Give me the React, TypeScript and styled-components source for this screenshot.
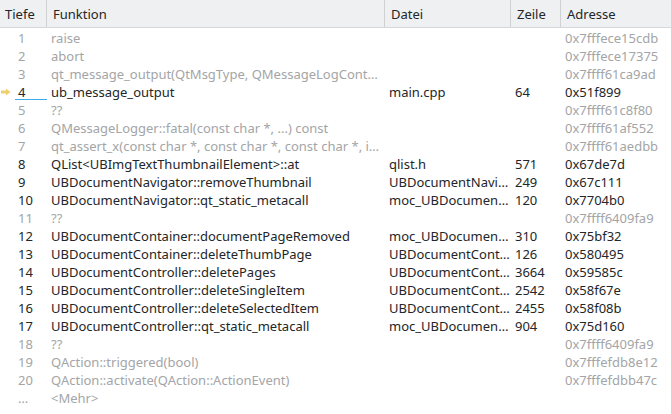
import styled, { createGlobalStyle } from 'styled-components';

interface Frame {
    level: string;
    func: string;
    file?: string;
    line?: string;
    address?: string;
    usable: boolean;
    current?: boolean;
}

const frames: Frame[] = [
    { level: '1', func: 'raise', address: '0x7fffece15cdb', usable: false },
    { level: '2', func: 'abort', address: '0x7fffece17375', usable: false },
    { level: '3', func: 'qt_message_output(QtMsgType, QMessageLogCont…', address: '0x7ffff61ca9ad', usable: false },
    { level: '4', func: 'ub_message_output', file: 'main.cpp', line: '64', address: '0x51f899', usable: true, current: true },
    { level: '5', func: '??', address: '0x7ffff61c8f80', usable: false },
    { level: '6', func: 'QMessageLogger::fatal(const char *, ...) const', address: '0x7ffff61af552', usable: false },
    { level: '7', func: 'qt_assert_x(const char *, const char *, const char *, i…', address: '0x7ffff61aedbb', usable: false },
    { level: '8', func: 'QList<UBImgTextThumbnailElement>::at', file: 'qlist.h', line: '571', address: '0x67de7d', usable: true },
    { level: '9', func: 'UBDocumentNavigator::removeThumbnail', file: 'UBDocumentNavi…', line: '249', address: '0x67c111', usable: true },
    { level: '10', func: 'UBDocumentNavigator::qt_static_metacall', file: 'moc_UBDocumen…', line: '120', address: '0x7704b0', usable: true },
    { level: '11', func: '??', address: '0x7ffff6409fa9', usable: false },
    { level: '12', func: 'UBDocumentContainer::documentPageRemoved', file: 'moc_UBDocumen…', line: '310', address: '0x75bf32', usable: true },
    { level: '13', func: 'UBDocumentContainer::deleteThumbPage', file: 'UBDocumentCont…', line: '126', address: '0x580495', usable: true },
    { level: '14', func: 'UBDocumentController::deletePages', file: 'UBDocumentCont…', line: '3664', address: '0x59585c', usable: true },
    { level: '15', func: 'UBDocumentController::deleteSingleItem', file: 'UBDocumentCont…', line: '2542', address: '0x58f67e', usable: true },
    { level: '16', func: 'UBDocumentController::deleteSelectedItem', file: 'UBDocumentCont…', line: '2455', address: '0x58f08b', usable: true },
    { level: '17', func: 'UBDocumentController::qt_static_metacall', file: 'moc_UBDocumen…', line: '904', address: '0x75d160', usable: true },
    { level: '18', func: '??', address: '0x7ffff6409fa9', usable: false },
    { level: '19', func: 'QAction::triggered(bool)', address: '0x7fffefdb8e12', usable: false },
    { level: '20', func: 'QAction::activate(QAction::ActionEvent)', address: '0x7fffefdbb47c', usable: false },
    { level: '…', func: '<Mehr>', usable: false },
];

const GlobalStyle = createGlobalStyle`
    html, body {
        margin: 0;
        padding: 0;
        background: #ffffff;
    }
    body {
        font-family: 'Noto Sans', 'DejaVu Sans', sans-serif;
        font-size: 13px;
        color: #232629;
    }
`;

const columns = '47px 338px 126px 50px 110px';

const Table = styled.div`
    width: 671px;
    height: 414px;
    overflow: hidden;
    background: #ffffff;
`;

const HeaderRow = styled.div`
    display: grid;
    grid-template-columns: ${columns};
    height: 28px;
    background: #eff0f1;
    border-bottom: 1px solid #d6d8da;
    box-sizing: border-box;
`;

const HeaderCell = styled.div<{ $pad?: number }>`
    display: flex;
    align-items: center;
    padding-left: ${(p) => p.$pad ?? 6}px;
    border-right: 1px solid #cfd1d3;
    white-space: nowrap;
    overflow: hidden;
    &:last-child {
        border-right: none;
    }
`;

const Body = styled.div`
    display: flex;
    flex-direction: column;
    padding-top: 1px;
`;

const Row = styled.div<{ $usable: boolean }>`
    display: grid;
    grid-template-columns: ${columns};
    height: 18px;
    line-height: 18px;
    color: ${(p) => (p.$usable ? '#232629' : '#a3a5a7')};
`;

const Cell = styled.div<{ $pad?: number }>`
    padding-left: ${(p) => p.$pad ?? 4}px;
    white-space: nowrap;
    overflow: hidden;
`;

const LevelCell = styled.div`
    position: relative;
    padding-left: 18px;
    white-space: nowrap;
`;

const FocusLine = styled.span`
    position: absolute;
    left: 15px;
    right: 0;
    bottom: 1px;
    height: 1px;
    background-color: #3daee9;
`;

const Marker = styled.svg`
    position: absolute;
    left: 1px;
    top: 5px;
`;

const CurrentArrow = () => (
    <Marker width="10" height="8" viewBox="0 0 10 8">
        <path d="M0 2.6h5V0.5L9.5 4 5 7.5V5.4H0z" fill="#efcf6e" />
    </Marker>
);

const App = () => {
    return (
        <>
            <GlobalStyle />
            <Table>
                <HeaderRow>
                    <HeaderCell $pad={5}>Tiefe</HeaderCell>
                    <HeaderCell>Funktion</HeaderCell>
                    <HeaderCell>Datei</HeaderCell>
                    <HeaderCell>Zeile</HeaderCell>
                    <HeaderCell>Adresse</HeaderCell>
                </HeaderRow>
                <Body>
                    {frames.map((f) => (
                        <Row key={f.level} $usable={f.usable}>
                            <LevelCell>
                                {f.current && <CurrentArrow />}
                                {f.level}
                                {f.current && <FocusLine />}
                            </LevelCell>
                            <Cell>{f.func}</Cell>
                            <Cell>{f.file}</Cell>
                            <Cell>{f.line}</Cell>
                            <Cell>{f.address}</Cell>
                        </Row>
                    ))}
                </Body>
            </Table>
        </>
    );
};

export default App;
